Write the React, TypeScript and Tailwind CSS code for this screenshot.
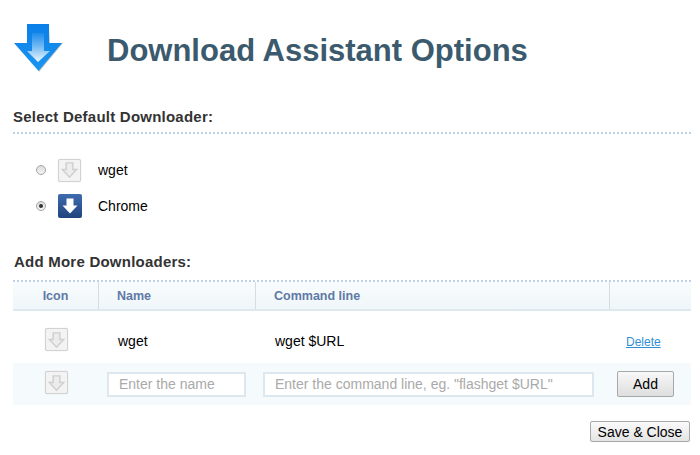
import React from "react";

function BigArrow() {
  return (
    <svg width="50" height="49" viewBox="0 0 50 49" className="shrink-0 ml-[1px]">
      <defs>
        <linearGradient id="outer" x1="0" y1="0" x2="0" y2="1">
          <stop offset="0" stopColor="#0a7ee8" />
          <stop offset="1" stopColor="#1c96f0" />
        </linearGradient>
        <linearGradient id="inner" x1="0" y1="0" x2="0" y2="1">
          <stop offset="0" stopColor="#1e8bec" />
          <stop offset="0.45" stopColor="#6fb9f3" />
          <stop offset="1" stopColor="#eef7fd" />
        </linearGradient>
      </defs>
      <path d="M36 2V19H49L25 48L24 44L35 19Z" fill="#a8a8a8" opacity="0.7" />
      <path d="M13 0H35V19H48L24.500 47L0 19H13Z" fill="url(#outer)" />
      <path d="M18 9H30V27H36L24 38L13 27H18Z" fill="url(#inner)" />
    </svg>
  );
}

function TileArrow({ color = "#cfcfcf" }: { color?: string }) {
  return (
    <svg viewBox="0 0 22 22" className="w-[22px] h-[22px]">
      <path d="M7.500 3.500H14.500V10.500H18.500L11 18.500L3.500 10.500H7.500Z" fill={color === "#fff" ? "#fff" : "#ececec"} stroke={color === "#fff" ? "none" : color} strokeWidth="1.500" />
    </svg>
  );
}

function GreyTile() {
  return (
    <div className="w-[23px] h-[23px] flex items-center justify-center rounded-[2px] border border-[#d2d2d2] bg-[#f3f3f3] shadow-[0_0_1px_#ccc]">
      <TileArrow />
    </div>
  );
}

function BlueTile() {
  return (
    <div className="w-[24px] h-[24px] flex items-center justify-center rounded-[2px] bg-gradient-to-b from-[#3f6cae] to-[#21437f]">
      <TileArrow color="#fff" />
    </div>
  );
}

function Radio({ checked }: { checked?: boolean }) {
  return (
    <span className="w-[10px] h-[10px] rounded-full border border-[#a4a4a4] bg-gradient-to-b from-[#dcdcdc] to-[#f4f4f4] flex items-center justify-center shrink-0">
      {checked && <span className="w-[4px] h-[4px] rounded-full bg-[#333]" />}
    </span>
  );
}

function Heading({ children }: { children: React.ReactNode }) {
  return <h2 className="text-[15px] leading-[18px] font-bold tracking-[0.23px] text-[#333]">{children}</h2>;
}

const inputCls =
  "h-[25px] border-2 border-[#dce7ef] bg-white px-[10px] text-[14px] text-[#333] placeholder:text-[#aaa] outline-none";

export default function App() {
  return (
    <div className="w-[700px] h-[455px] bg-white overflow-hidden font-['Liberation_Sans',Arial,sans-serif] text-[14px] text-black pl-[13px] pr-[9px]">
      <header className="flex items-start pt-[24px] h-[108px]">
        <BigArrow />
        <h1 className="ml-[43px] mt-[9px] text-[31px] leading-[36px] font-bold text-[#3b5a6e]">Download Assistant Options</h1>
      </header>

      <Heading>Select Default Downloader:</Heading>
      <div className="mt-[6px] border-t-2 border-dotted border-[#bcd0e6]" />

      <div className="mt-[23px] ml-[23px] flex flex-col gap-[10px]">
        <label className="flex items-center h-[26px]">
          <Radio />
          <span className="ml-[12px] w-[24px]"><GreyTile /></span>
          <span className="ml-[16px]">wget</span>
        </label>
        <label className="flex items-center h-[26px]">
          <Radio checked />
          <span className="ml-[12px] w-[24px]"><BlueTile /></span>
          <span className="ml-[16px]">Chrome</span>
        </label>
      </div>

      <div className="mt-[34px] ml-[1px]"><Heading>Add More Downloaders:</Heading></div>
      <div className="mt-[9px] border-t-2 border-dotted border-[#bcd0e6]" />

      <div className="grid grid-cols-[86px_157px_354px_81px] h-[29px] bg-gradient-to-b from-[#f9fcfd] to-[#eff6f9] border-b-2 border-[#dfe8ee] text-[12.500px] font-bold text-[#6079a6] items-stretch">
        <div className="flex items-center justify-center pt-[1px] border-r border-[#d5dde2]">Icon</div>
        <div className="flex items-center pt-[1px] pl-[18px] border-r border-[#d5dde2]">Name</div>
        <div className="flex items-center pt-[1px] pl-[18px] border-r border-[#d5dde2]">Command line</div>
        <div />
      </div>

      <div className="grid grid-cols-[86px_157px_354px_81px] h-[52px] items-center">
        <div className="flex justify-center pt-[5px]"><GreyTile /></div>
        <div className="pl-[19px] pt-[8px]">wget</div>
        <div className="pl-[19px] pt-[8px]">wget $URL</div>
        <div className="pl-[16px] pt-[8px]">
          <a href="#" className="text-[12px] underline text-[#2f8fd3]">Delete</a>
        </div>
      </div>

      <div className="grid grid-cols-[86px_157px_354px_81px] h-[42px] items-center bg-[#f5fafd]">
        <div className="flex justify-center mb-[3px]"><GreyTile /></div>
        <div className="pl-[8px]"><input className={inputCls + " w-[139px]"} placeholder="Enter the name" /></div>
        <div className="pl-[7px]"><input className={inputCls + " w-[331px]"} placeholder={'Enter the command line, eg. "flashget $URL"'} /></div>
        <div className="pl-[7px]">
          <button className="w-[57px] h-[26px] rounded-[2px] border border-[#a8a8a8] bg-gradient-to-b from-[#f8f8f8] to-[#dedede] text-[14px] text-black">Add</button>
        </div>
      </div>

      <div className="flex justify-end mt-[16px] pr-[1px]">
        <button className="w-[100px] h-[21px] rounded-[2px] border border-[#a8a8a8] bg-gradient-to-b from-[#fafafa] to-[#e4e4e4] text-[14px] text-black">Save &amp; Close</button>
      </div>
    </div>
  );
}
